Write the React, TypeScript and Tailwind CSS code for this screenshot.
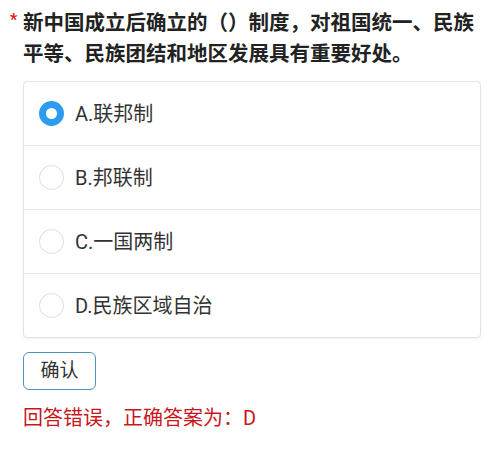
const options = [
    { key: "A", label: "联邦制" },
    { key: "B", label: "邦联制" },
    { key: "C", label: "一国两制" },
    { key: "D", label: "民族区域自治" },
];

function App() {
    const selected = "A";

    return (
        <div
            className="w-[500px] h-[451px] bg-white text-[#333]"
            style={{ fontFamily: 'Roboto, "Noto Sans CJK SC", sans-serif' }}
        >
            <div className="flex pl-[10px] pr-[12px] pt-[8px]">
                <span className="w-[13px] shrink-0 text-[16px] leading-[24px] text-[#e02020] font-bold">
                    *
                </span>
                <p className="text-[20.5px] leading-[31px] font-bold text-[#222]">
                    新中国成立后确立的（）制度，对祖国统一、民族平等、民族团结和地区发展具有重要好处。
                </p>
            </div>

            <div className="ml-[23px] mr-[19px] mt-[11px] border border-[#e3e3e3] rounded-[4px] shadow-[0_1px_2px_rgba(0,0,0,0.06)]">
                {options.map((o, i) => (
                    <div
                        key={o.key}
                        className={`flex items-center pl-[15px] ${
                            i > 0 ? "h-[64px] border-t border-[#e3e3e3]" : "h-[63px]"
                        }`}
                    >
                        {o.key === selected ? (
                            <span className="w-[25px] h-[25px] rounded-full border-[7px] border-[#2d9cf0] bg-white" />
                        ) : (
                            <span className="w-[25px] h-[25px] rounded-full border border-[#dcdcdc] bg-white" />
                        )}
                        <span className="ml-[11px] text-[20px] text-[#333]">
                            {o.key}.{o.label}
                        </span>
                    </div>
                ))}
            </div>

            <button className="ml-[23px] mt-[14px] w-[73px] h-[38px] border border-[#4f93bd] rounded-[6px] text-[19px] text-[#333] bg-white">
                确认
            </button>

            <p className="ml-[23px] mt-[16px] text-[20px] leading-[24px] text-[#c8161d]">
                回答错误，正确答案为：D
            </p>
        </div>
    );
}

export default App;
